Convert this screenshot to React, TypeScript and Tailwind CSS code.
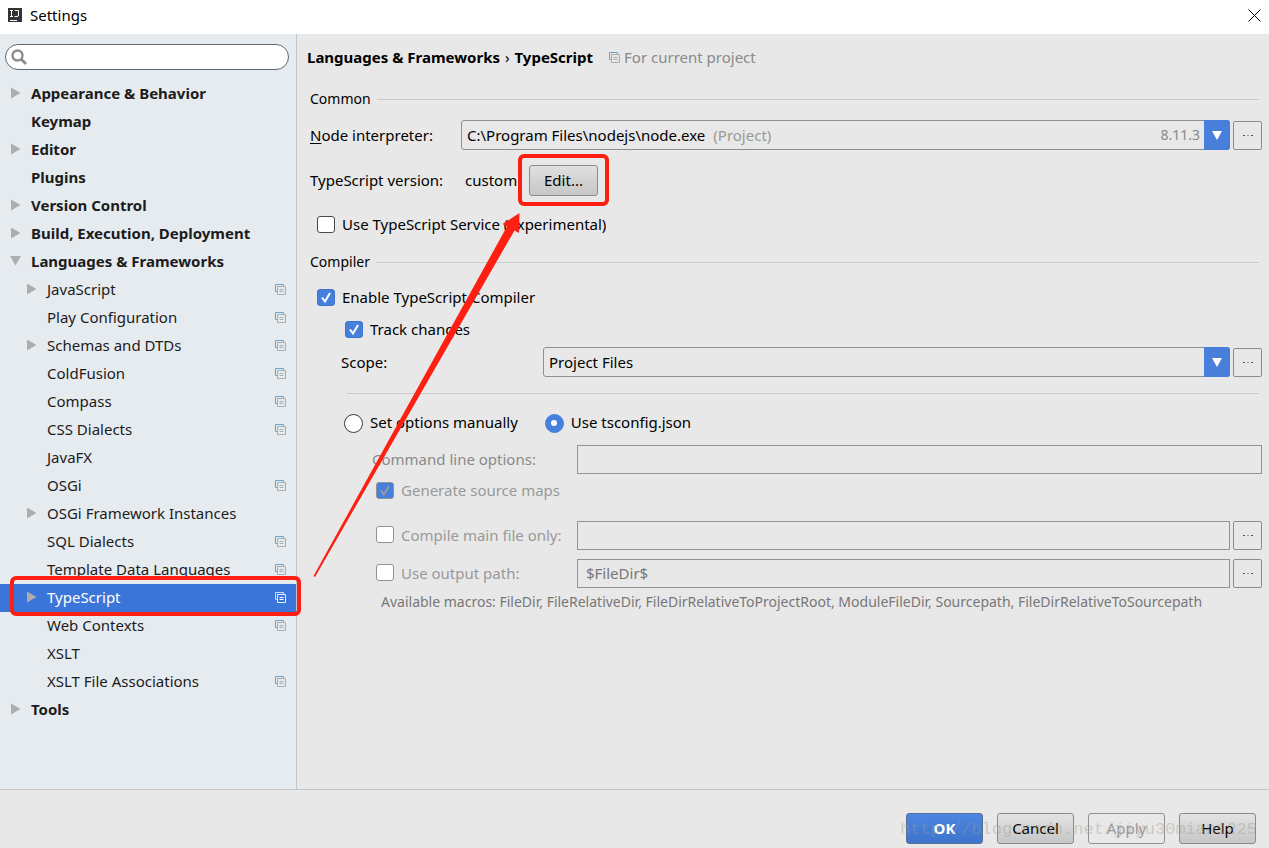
import React from 'react';
import clsx from 'clsx';

interface TreeItem {
  label: string;
  level: 0 | 1;
  state?: 'open' | 'closed';
  perProject?: boolean;
  selected?: boolean;
}

const TREE: TreeItem[] = [
  { label: 'Appearance & Behavior', level: 0, state: 'closed' },
  { label: 'Keymap', level: 0 },
  { label: 'Editor', level: 0, state: 'closed' },
  { label: 'Plugins', level: 0 },
  { label: 'Version Control', level: 0, state: 'closed' },
  { label: 'Build, Execution, Deployment', level: 0, state: 'closed' },
  { label: 'Languages & Frameworks', level: 0, state: 'open' },
  { label: 'JavaScript', level: 1, state: 'closed', perProject: true },
  { label: 'Play Configuration', level: 1, perProject: true },
  { label: 'Schemas and DTDs', level: 1, state: 'closed', perProject: true },
  { label: 'ColdFusion', level: 1, perProject: true },
  { label: 'Compass', level: 1, perProject: true },
  { label: 'CSS Dialects', level: 1, perProject: true },
  { label: 'JavaFX', level: 1 },
  { label: 'OSGi', level: 1, perProject: true },
  { label: 'OSGi Framework Instances', level: 1, state: 'closed' },
  { label: 'SQL Dialects', level: 1, perProject: true },
  { label: 'Template Data Languages', level: 1, perProject: true },
  { label: 'TypeScript', level: 1, state: 'closed', perProject: true, selected: true },
  { label: 'Web Contexts', level: 1, perProject: true },
  { label: 'XSLT', level: 1 },
  { label: 'XSLT File Associations', level: 1, perProject: true },
  { label: 'Tools', level: 0, state: 'closed' },
];

const ProjectIcon = ({ selected = false }: { selected?: boolean }) => (
  <svg width="11" height="11" viewBox="0 0 11 11" fill="none" className="shrink-0">
    <path d="M2 7.500H.5V.5h8V2" stroke={selected ? '#c5dbf8' : '#69a5c8'} />
    <path d="M2.500 2.500h8v8h-8z" stroke={selected ? '#e6effc' : '#a9adb0'} />
    <path d="M4.500 5.500h4M4.500 7.500h4" stroke={selected ? '#ffffff' : '#a9adb0'} />
  </svg>
);

const Twisty = ({ state }: { state?: 'open' | 'closed' }) => (
  <svg width="12" height="12" viewBox="0 0 12 12" fill="#adadad" className="shrink-0">
    {state === 'closed' && <path d="M1 .5v11L10.5 6z" />}
    {state === 'open' && <path d="M0 1h11L5.500 10.500z" />}
  </svg>
);

const TreeRow = ({ item }: { item: TreeItem }) => (
  <li className="relative">
    <button
      type="button"
      className={clsx(
        'flex h-7 w-full items-center gap-2 pr-[10px] pb-[2px] text-left',
        item.level === 0 ? 'pl-[10px] font-bold' : 'pl-[26px]',
        item.selected ? 'bg-[#3b75d9] text-white' : 'text-[#1c1c1c]',
      )}
    >
      <Twisty state={item.state} />
      <span className="flex-1 whitespace-nowrap pl-px">{item.label}</span>
      {item.perProject && <ProjectIcon selected={item.selected} />}
    </button>
    {item.selected && (
      <span className="pointer-events-none absolute -top-2 -right-[5px] -bottom-1 left-[10px] z-10 rounded-md border-4 border-[#ff1f12]" />
    )}
  </li>
);

const Section = ({ title }: { title: string }) => (
  <div className="flex h-5 items-center gap-[6px] pr-[3px] text-[14px]">
    <h2>{title}</h2>
    <span className="h-px flex-1 bg-[#cbcbcb]" />
  </div>
);

interface CheckProps {
  id: string;
  label: string;
  checked?: boolean;
  disabled?: boolean;
}

const Check = ({ id, label, checked, disabled }: CheckProps) => (
  <div className="flex h-6 items-center gap-[7px]">
    <span className="relative flex">
      <input
        id={id}
        type="checkbox"
        defaultChecked={checked}
        disabled={disabled}
        className="peer h-[17px] w-[18px] appearance-none rounded-[3px] border border-[#4a4a4a] bg-white checked:border-[#3f74cb] checked:bg-[#4580dc] disabled:border-[#929292]"
      />
      <svg
        viewBox="0 0 18 17"
        fill="none"
        className="pointer-events-none absolute inset-0 hidden stroke-white stroke-2 peer-checked:block peer-disabled:stroke-[#9a9a9a]"
      >
        <path d="M5 8.500l3 4L13 4" />
      </svg>
    </span>
    <label htmlFor={id} className={clsx('whitespace-nowrap', disabled && 'text-[#999]')}>
      {label}
    </label>
  </div>
);

const Radio = ({ id, label, checked }: CheckProps) => (
  <div className="flex h-6 items-center gap-[7px]">
    <span className="relative flex">
      <input
        id={id}
        name="options"
        type="radio"
        defaultChecked={checked}
        className="peer size-[19px] appearance-none rounded-full border border-[#3a3a3a] bg-white checked:border-[#4580dc] checked:bg-[#4580dc]"
      />
      <span className="pointer-events-none absolute inset-0 m-auto hidden size-[6px] rounded-full bg-white peer-checked:block" />
    </span>
    <label htmlFor={id} className="whitespace-nowrap pb-[2px]">{label}</label>
  </div>
);

const More = ({ label }: { label: string }) => (
  <button
    type="button"
    aria-label={label}
    className="ml-[3px] flex h-[29px] w-[29px] shrink-0 items-center justify-center rounded-[2px] border border-[#8c8c8c]"
  >
    <svg width="10" height="1" viewBox="0 0 10 1" fill="#555">
      <path d="M0 0h2v1H0zM4.500 0h1v1h-1zM8 0h2v1H8z" />
    </svg>
  </button>
);

interface ComboProps {
  id: string;
  value: string;
  hint?: string;
  version?: string;
}

const Combo = ({ id, value, hint, version }: ComboProps) => (
  <div className="relative flex h-[30px] flex-1 items-center">
    <select
      id={id}
      className="h-full w-full appearance-none rounded-[3px] border border-[#8f8f8f] bg-transparent pl-[5px]"
    >
      <option>{value}</option>
    </select>
    <span className="pointer-events-none absolute inset-0 flex items-center justify-end">
      {hint && (
        <span className="flex flex-1 gap-2 pl-[6px] text-[#999]">
          <span className="invisible">{value}</span>
          {hint}
        </span>
      )}
      {version && <span className="pr-1 text-[14px] text-[#8a8a8a]">{version}</span>}
      <span className="flex h-full w-[26px] items-center justify-center rounded-r-[3px] bg-[#477fda]">
        <svg width="10" height="9" viewBox="0 0 10 9" fill="#fff">
          <path d="M0 0h10L5 9z" />
        </svg>
      </span>
    </span>
  </div>
);

const TextField = ({ id, label, value }: { id: string; label: string; value?: string }) => (
  <input
    id={id}
    aria-label={label}
    type="text"
    disabled
    defaultValue={value}
    className="h-[29px] min-w-0 flex-1 border border-[#929292] bg-transparent px-2 pb-[2px] text-[#777]"
  />
);

const FooterButton = ({ label, kind = 'plain' }: { label: string; kind?: 'primary' | 'plain' | 'disabled' }) => (
  <button
    type="button"
    disabled={kind === 'disabled'}
    className={clsx(
      'h-[31px] w-[77px] rounded-[3px] border pb-[2px]',
      kind === 'primary' && 'border-[#5a6f96] bg-linear-to-b from-[#4a86e2] to-[#3f74cd] font-bold text-white',
      kind === 'plain' && 'border-[#8a8a8a] bg-linear-to-b from-[#e3e3e3] to-[#c6c6c6] text-black',
      kind === 'disabled' && 'border-[#929292] text-[#999]',
    )}
  >
    {label}
  </button>
);

export default function App() {
  return (
    <div className="relative flex min-h-screen flex-col bg-[#e8e8e8] font-['Noto_Sans','Open_Sans',sans-serif] text-[15px] leading-5 text-black">
      <header className="flex h-[34px] items-center bg-white pb-1 pl-2 pr-2">
        <svg width="14" height="14" viewBox="0 0 14 14" className="mr-2">
          <path d="M0 0h14v14H0z" fill="#333" />
          <path d="M2 2.500h3M3.500 2.500v6M2 8.500h3M7 2.500h3.500v4.500q0 1.500-1.500 1.500H6.500M2 12.500h7" stroke="#fff" fill="none" />
        </svg>
        <h1 className="flex-1">Settings</h1>
        <button type="button" aria-label="Close">
          <svg width="13" height="13" viewBox="0 0 13 13" stroke="#000">
            <path d="M.5.5l12 12M12.500.5l-12 12" />
          </svg>
        </button>
      </header>

      <div className="flex flex-1">
        <aside className="w-[297px] shrink-0 border-r border-[#c3c5c6] bg-[#e6ebf0]">
          <div className="relative mx-[5px] mr-[7px] mt-[10px] mb-[10px] h-[26px]">
            <input
              type="search"
              aria-label="Search settings"
              className="h-full w-full rounded-full border border-[#62666a] bg-white pl-8"
            />
            <svg
              width="17"
              height="17"
              viewBox="0 0 17 17"
              fill="none"
              stroke="#8d8d8d"
              className="pointer-events-none absolute left-[6px] top-[5px]"
            >
              <circle cx="6.500" cy="6.500" r="5" strokeWidth="2.400" />
              <path d="M10 10l5 5" strokeWidth="2.800" />
            </svg>
          </div>
          <ul>
            {TREE.map((item) => (
              <TreeRow key={item.label} item={item} />
            ))}
          </ul>
        </aside>

        <main className="flex-1 pl-[10px] pr-[7px] pt-[13px]">
          <div className="flex items-center gap-4 whitespace-nowrap">
            <strong>
              Languages &amp; Frameworks <span className="mx-px font-normal">›</span> TypeScript
            </strong>
            <span className="flex items-center gap-1 text-[#8a8a8a]">
              <ProjectIcon />
              For current project
            </span>
          </div>

          <div className="pl-[3px]">
            <div className="mt-[22px]">
              <Section title="Common" />
            </div>
            <div className="mt-[11px] flex items-center">
              <label htmlFor="node" className="w-[151px]">
                <u className="underline-offset-2">N</u>ode interpreter:
              </label>
              <Combo id="node" value="C:\Program Files\nodejs\node.exe" hint="(Project)" version="8.11.3" />
              <More label="Browse interpreters" />
            </div>
            <div className="mt-[15px] flex h-[31px] items-center">
              <span className="w-[155px] pb-[2px]">TypeScript version:</span>
              <span className="w-16 pb-[2px]">custom</span>
              <span className="relative flex">
                <button
                  type="button"
                  className="h-[31px] w-[69px] rounded-[3px] border border-[#8a8a8a] bg-linear-to-b from-[#e0e0e0] to-[#c6c6c6] pb-[2px]"
                >
                  Edit...
                </button>
                <span className="pointer-events-none absolute -inset-x-[11px] -top-[11px] -bottom-[10px] rounded-md border-4 border-[#ff1f12]" />
              </span>
            </div>
            <div className="mt-4 pl-[7px]">
              <Check id="service" label="Use TypeScript Service (Experimental)" />
            </div>

            <div className="mt-4">
              <Section title="Compiler" />
            </div>
            <div className="mt-[13px] pl-[7px]">
              <Check id="compiler" label="Enable TypeScript Compiler" checked />
            </div>
            <div className="mt-2 pl-[35px]">
              <Check id="track" label="Track changes" checked />
            </div>
            <div className="mt-[6px] flex items-center pl-[31px]">
              <label htmlFor="scope" className="w-[202px]">Scope:</label>
              <Combo id="scope" value="Project Files" />
              <More label="Edit scopes" />
            </div>
            <hr className="ml-[37px] mr-[3px] mt-4 border-[#cbcbcb]" />

            <div className="mt-[17px] flex gap-[27px] pl-[34px]">
              <Radio id="manual" label="Set options manually" />
              <Radio id="tsconfig" label="Use tsconfig.json" checked />
            </div>
            <div className="mt-[10px] flex items-center pl-[62px]">
              <label htmlFor="cmd" className="w-[205px] pb-[2px] text-[#8a8a8a]">Command line options:</label>
              <TextField id="cmd" label="Command line options" />
            </div>
            <div className="mt-1 pl-[66px]">
              <Check id="maps" label="Generate source maps" checked disabled />
            </div>
            <div className="mt-[19px] flex items-center pl-[66px]">
              <div className="w-[201px] pb-[2px]">
                <Check id="mainfile" label="Compile main file only:" disabled />
              </div>
              <TextField id="main" label="Main file" />
              <More label="Browse main file" />
            </div>
            <div className="mt-[9px] flex items-center pl-[66px]">
              <div className="w-[201px] pb-[2px]">
                <Check id="output" label="Use output path:" disabled />
              </div>
              <TextField id="path" label="Output path" value="$FileDir$" />
              <More label="Browse output path" />
            </div>
            <p className="mt-1 whitespace-nowrap pl-[71px] text-[14px] text-[#777]">
              Available macros: FileDir, FileRelativeDir, FileDirRelativeToProjectRoot, ModuleFileDir, Sourcepath, FileDirRelativeToSourcepath
            </p>
          </div>
        </main>
      </div>

      <footer className="relative flex h-[59px] justify-end gap-[14px] border-t border-[#c3c3c3] pr-[13px] pt-[23px]">
        <FooterButton label="OK" kind="primary" />
        <FooterButton label="Cancel" />
        <FooterButton label="Apply" kind="disabled" />
        <FooterButton label="Help" />
        <span className="pointer-events-none absolute bottom-2 right-3 font-['Liberation_Mono',monospace] text-[17px] text-[#9a9a8a]/40">
          http://blog.csdn.net/jiyu30mian1225
        </span>
      </footer>

      <svg width="210" height="368" viewBox="312 211 210 368" fill="#ff1f12" className="pointer-events-none absolute left-[312px] top-[211px]">
        <path d="M519.500 213L519 233L514.500 230.500L315 577L313.500 576L507 226.500L502.500 224z" />
      </svg>
    </div>
  );
}
